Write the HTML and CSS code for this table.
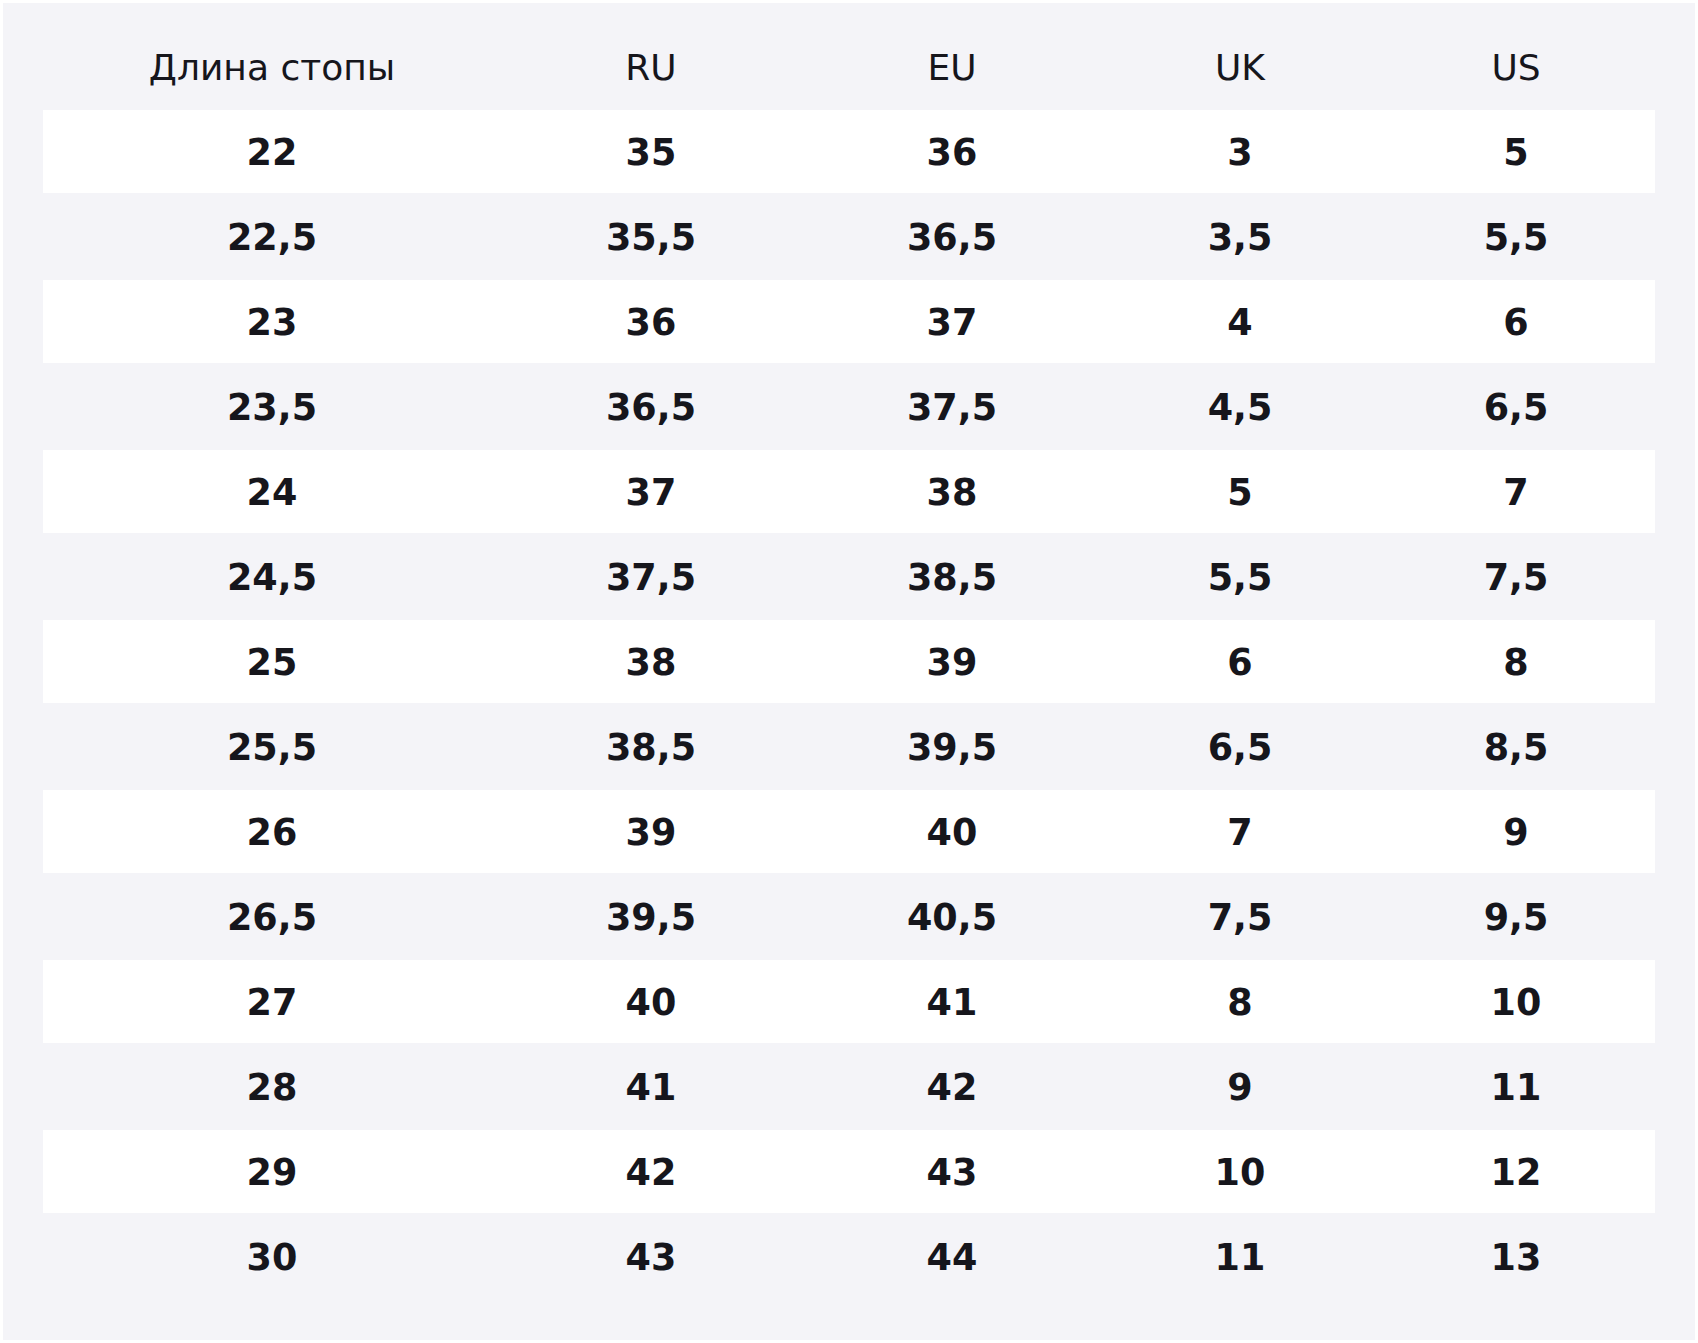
FILE: index.html
```html
<!DOCTYPE html>
<html lang="ru">
<head>
<meta charset="utf-8">
<title>Размерная сетка</title>
<link rel="stylesheet" href="styles.css">
</head>
<body>
<div class="sheet">
  <table class="sizes">
    <colgroup>
      <col class="c1"><col class="c2"><col class="c3"><col class="c4"><col class="c5">
    </colgroup>
    <thead>
      <tr class="head"><th>Длина стопы</th><th>RU</th><th>EU</th><th>UK</th><th>US</th></tr>
    </thead>
    <tbody>
      <tr class="odd"><td>22</td><td>35</td><td>36</td><td>3</td><td>5</td></tr>
      <tr class="even"><td>22,5</td><td>35,5</td><td>36,5</td><td>3,5</td><td>5,5</td></tr>
      <tr class="odd"><td>23</td><td>36</td><td>37</td><td>4</td><td>6</td></tr>
      <tr class="even"><td>23,5</td><td>36,5</td><td>37,5</td><td>4,5</td><td>6,5</td></tr>
      <tr class="odd"><td>24</td><td>37</td><td>38</td><td>5</td><td>7</td></tr>
      <tr class="even"><td>24,5</td><td>37,5</td><td>38,5</td><td>5,5</td><td>7,5</td></tr>
      <tr class="odd"><td>25</td><td>38</td><td>39</td><td>6</td><td>8</td></tr>
      <tr class="even"><td>25,5</td><td>38,5</td><td>39,5</td><td>6,5</td><td>8,5</td></tr>
      <tr class="odd"><td>26</td><td>39</td><td>40</td><td>7</td><td>9</td></tr>
      <tr class="even"><td>26,5</td><td>39,5</td><td>40,5</td><td>7,5</td><td>9,5</td></tr>
      <tr class="odd"><td>27</td><td>40</td><td>41</td><td>8</td><td>10</td></tr>
      <tr class="even"><td>28</td><td>41</td><td>42</td><td>9</td><td>11</td></tr>
      <tr class="odd"><td>29</td><td>42</td><td>43</td><td>10</td><td>12</td></tr>
      <tr class="even"><td>30</td><td>43</td><td>44</td><td>11</td><td>13</td></tr>
    </tbody>
  </table>
</div>
</body>
</html>
```
FILE: styles.css
```css
html, body {
  background: #ffffff;
}
body {
  margin: 3px;
  font-family: "DejaVu Sans", "Noto Sans", sans-serif;
  color: #16161c;
}
.sheet {
  background: #f4f4f8;
  padding: 40px;
}
.sizes {
  width: 100%;
  table-layout: fixed;
  border-collapse: collapse;
  border-spacing: 0;
}
.c1 { width: 458px; }
.c2 { width: 300px; }
.c3 { width: 302px; }
.c4 { width: 274px; }
.c5 { width: 278px; }
.sizes th,
.sizes td {
  padding: 0;
  text-align: center;
  line-height: 42px;
}
.sizes th {
  font-size: 36px;
  font-weight: normal;
  height: 67px;
  vertical-align: top;
  padding-top: 4px;
  box-sizing: border-box;
}
.sizes td {
  font-size: 36.5px;
  font-weight: bold;
  vertical-align: middle;
  padding-top: 2px;
  box-sizing: border-box;
}
.odd {
  background: #ffffff;
  height: 83px;
}
.even {
  background: transparent;
  height: 87px;
}
```
